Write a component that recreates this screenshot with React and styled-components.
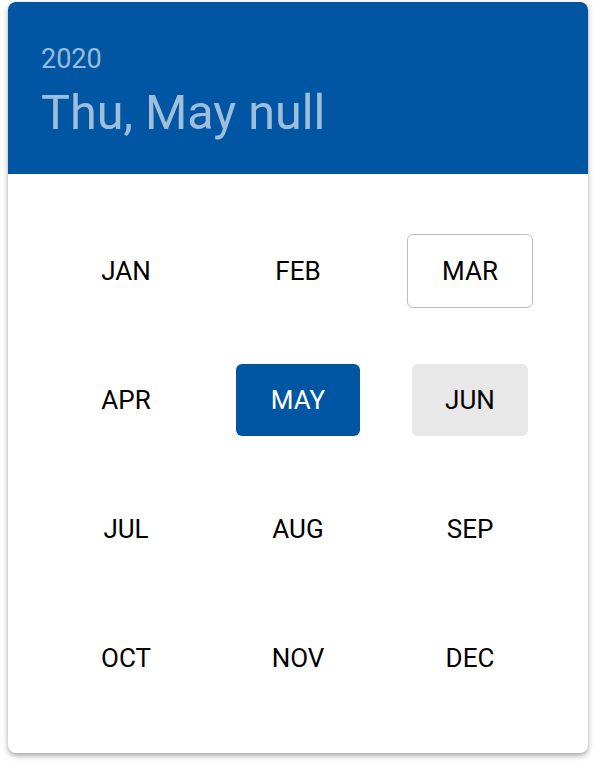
import React from "react";
import styled, { createGlobalStyle } from "styled-components";

const GlobalStyle = createGlobalStyle`
  body {
    margin: 0;
    background: #ffffff;
    font-family: Roboto, "Liberation Sans", sans-serif;
  }
`;

const Page = styled.div`
  padding: 2px 12px 12px 8px;
`;

const Card = styled.div`
  width: 580px;
  background: #fff;
  border-radius: 8px;
  overflow: hidden;
  box-shadow: 0 2px 4px -1px rgba(0, 0, 0, 0.2), 0 4px 5px 0 rgba(0, 0, 0, 0.14),
    0 1px 10px 0 rgba(0, 0, 0, 0.12);
`;

const Header = styled.div`
  background: #0056a3;
  height: 172px;
  box-sizing: border-box;
  padding: 40px 33px 0;
  color: rgba(255, 255, 255, 0.62);
`;

const Year = styled.div`
  font-size: 27px;
  line-height: 34px;
`;

const DateLine = styled.div`
  font-size: 48.5px;
  line-height: 56px;
  margin-top: 9px;
`;

const Grid = styled.div`
  display: grid;
  grid-template-columns: repeat(3, 1fr);
  grid-auto-rows: 129px;
  padding: 32px 32px 31px;
`;

const Cell = styled.div`
  display: flex;
  align-items: center;
  justify-content: center;
`;

const Month = styled.button`
  font-family: Roboto, "Liberation Sans", sans-serif;
  font-size: 26px;
  color: ${(p) => (p.$selected ? "#fff" : "#000")};
  background: ${(p) =>
    p.$selected ? "#0056a3" : p.$hover ? "#e8e8e8" : "transparent"};
  border: 1px solid ${(p) => (p.$current ? "#bdbdbd" : "transparent")};
  border-radius: 6px;
  width: ${(p) => (p.$hover ? "116px" : p.$current ? "126px" : "124px")};
  height: ${(p) => (p.$current ? "74px" : "72px")};
  padding: 0;
  cursor: pointer;
`;

const months = ["JAN", "FEB", "MAR", "APR", "MAY", "JUN", "JUL", "AUG", "SEP", "OCT", "NOV", "DEC"];

export default function App() {
  return (
    <>
      <GlobalStyle />
      <Page>
        <Card>
          <Header>
            <Year>2020</Year>
            <DateLine>Thu, May null</DateLine>
          </Header>
          <Grid>
            {months.map((m) => (
              <Cell key={m}>
                <Month
                  $current={m === "MAR"}
                  $selected={m === "MAY"}
                  $hover={m === "JUN"}
                >
                  {m}
                </Month>
              </Cell>
            ))}
          </Grid>
        </Card>
      </Page>
    </>
  );
}
